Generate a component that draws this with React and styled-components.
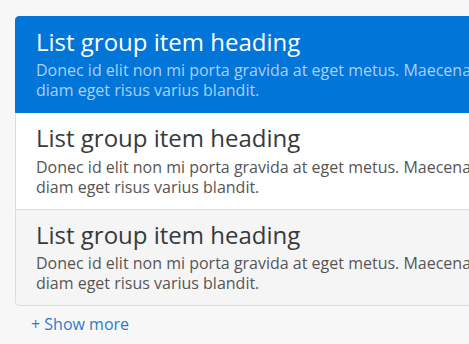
import React from 'react';
import styled, { createGlobalStyle } from 'styled-components';

const GlobalStyle = createGlobalStyle`
  html, body {
    margin: 0;
    padding: 0;
    background: #f7f7f7;
    overflow: hidden;
  }
  body {
    font-family: 'Open Sans', 'Liberation Sans', sans-serif;
  }
`;

/** 페이지 래퍼 */
const Page = styled.div`
  padding: 16px 0 0 15px;
  width: 540px;
`;

/** 리스트 그룹 */
const ListGroup = styled.div`
  display: flex;
  flex-direction: column;
  width: 532px;
`;

const Item = styled.a`
  display: block;
  padding: 12px 20px;
  margin-bottom: -1px;
  border: 1px solid ${({ $active }) => ($active ? '#0275d8' : '#dddddd')};
  background: ${({ $active, $muted }) => ($active ? '#0275d8' : $muted ? '#f5f5f5' : '#ffffff')};
  color: inherit;
  text-decoration: none;
  position: relative;
  z-index: ${({ $active }) => ($active ? 2 : 1)};

  &:first-child {
    border-top-left-radius: 4px;
    border-top-right-radius: 4px;
  }
  &:last-child {
    margin-bottom: 0;
    border-bottom-left-radius: 4px;
    border-bottom-right-radius: 4px;
  }
`;

const Heading = styled.h4`
  margin: 0 0 5px 0;
  font-size: 24px;
  font-weight: 400;
  line-height: 1.1;
  color: ${({ $active }) => ($active ? '#ffffff' : '#373a3c')};
`;

const Text = styled.p`
  margin: 0;
  font-size: 16px;
  line-height: 20px;
  color: ${({ $active }) => ($active ? '#a8d1f4' : '#555555')};
`;

/** 더 보기 링크 */
const ShowMore = styled.button`
  display: inline-block;
  padding: 8px 16px;
  border: 0;
  background: none;
  font-family: inherit;
  font-size: 16px;
  line-height: 1.25;
  color: #2b7bcb;
  cursor: pointer;
`;

const items = [
  { active: true },
  {},
  { muted: true },
];

export default function App() {
  return (
    <Page>
      <GlobalStyle />
      <ListGroup>
        {items.map((it, i) => (
          <Item key={i} href="#" $active={it.active} $muted={it.muted}>
            <Heading $active={it.active}>List group item heading</Heading>
            <Text $active={it.active}>
              Donec id elit non mi porta gravida at eget metus. Maecenas sed diam eget risus varius blandit.
            </Text>
          </Item>
        ))}
      </ListGroup>
      <ShowMore>+ Show more</ShowMore>
    </Page>
  );
}
